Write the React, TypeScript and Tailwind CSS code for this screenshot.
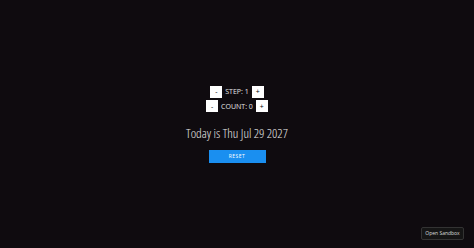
import React, { useState } from "react";

export default function App() {
  const [step, setStep] = useState(1);
  const [count, setCount] = useState(0);
  const font = { fontFamily: '"Open Sans", "Noto Sans", sans-serif' };
  return (
    <div
      className="relative flex h-screen w-full flex-col items-center justify-center bg-[#0f0b0f] text-[#e6e6e6]"
      style={font}
    >
      <div className="flex h-[12px] items-center gap-[3px]">
        <button
          onClick={() => setStep((s) => s - 1)}
          className="flex h-[12px] w-[12px] items-center justify-center bg-white text-[7px] leading-none text-black"
        >
          -
        </button>
        <span className="text-[7px] leading-none">STEP: {step}</span>
        <button
          onClick={() => setStep((s) => s + 1)}
          className="flex h-[12px] w-[12px] items-center justify-center bg-white text-[7px] leading-none text-black"
        >
          +
        </button>
      </div>
      <div className="mt-[2px] flex h-[13px] items-center gap-[3px]">
        <button
          onClick={() => setCount((c) => c - step)}
          className="flex h-[12px] w-[12px] items-center justify-center bg-white text-[7px] leading-none text-black"
        >
          -
        </button>
        <span className="text-[7px] leading-none">COUNT: {count}</span>
        <button
          onClick={() => setCount((c) => c + step)}
          className="flex h-[12px] w-[12px] items-center justify-center bg-white text-[7px] leading-none text-black"
        >
          +
        </button>
      </div>
      <div className="mt-[12px] text-[13px] font-light font-stretch-[75%] leading-[16px] text-[#e6e6e6]">
        Today is Thu Jul 29 2027
      </div>
      <button
        onClick={() => {
          setCount(0);
          setStep(1);
        }}
        className="mt-[9px] flex h-[13px] w-[57px] items-center justify-center bg-[#1a8ff0] text-[5px] leading-none tracking-[0.5px] text-white"
      >
        RESET
      </button>
      <button className="absolute bottom-[8px] right-[10px] flex h-[13px] w-[43px] items-center justify-center rounded-[2px] border border-[#333] bg-[#151515] text-[5px] leading-none text-[#ddd]">
        Open Sandbox
      </button>
    </div>
  );
}
